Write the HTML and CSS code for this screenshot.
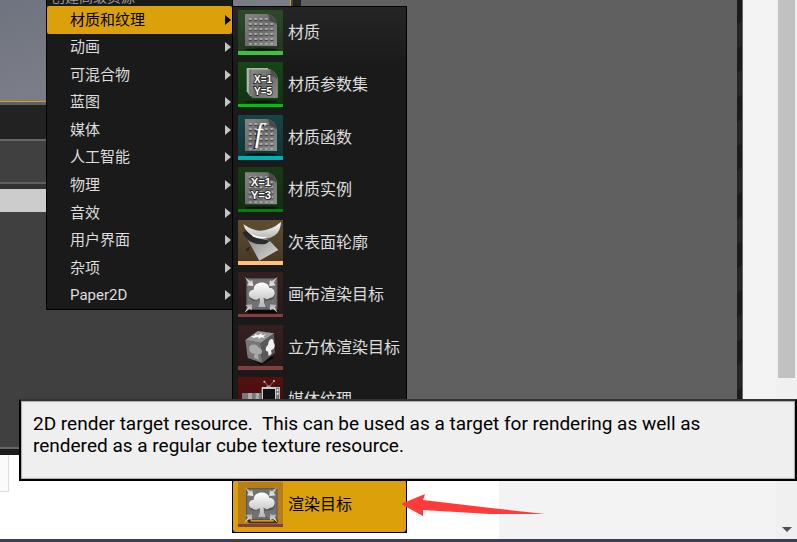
FILE: index.html
```html
<!DOCTYPE html>
<html lang="zh-CN">
<head>
<meta charset="utf-8">
<title>渲染目标</title>
<link rel="stylesheet" href="styles.css">
</head>
<body>
<svg class="defs" aria-hidden="true">
  <defs>
    <linearGradient id="paper" x1="0" y1="0" x2="1" y2="1"><stop offset="0" stop-color="#858585"/><stop offset=".5" stop-color="#6c6c6c"/><stop offset="1" stop-color="#8e8e8e"/></linearGradient>
    <linearGradient id="light" x1="0" y1="0" x2="0" y2="1"><stop offset="0" stop-color="#fff"/><stop offset="1" stop-color="#b4b4b4"/></linearGradient>
    <linearGradient id="spike" x1="0" y1="0" x2="0" y2="1"><stop offset="0" stop-color="#aaa"/><stop offset="1" stop-color="#eee"/></linearGradient>
    <linearGradient id="sheet" x1="0" y1="0" x2="1" y2="1"><stop offset="0" stop-color="#777"/><stop offset="1" stop-color="#ddd"/></linearGradient>
    <linearGradient id="shade" x1="0" y1="0" x2="0" y2="1"><stop offset="0" stop-color="#000" stop-opacity="0"/><stop offset="1" stop-color="#000" stop-opacity=".25"/></linearGradient>
    <pattern id="dots" x="29" y="21" width="16" height="15" patternUnits="userSpaceOnUse"><ellipse cx="8" cy="9" rx="6" ry="4" fill="#484848"/><ellipse cx="8" cy="6" rx="5" ry="3" fill="#b4b4b4"/></pattern>
    <symbol id="page" viewBox="0 0 135 135">
      <ellipse cx="70" cy="119" rx="49" ry="4" fill="#000" opacity=".6"/>
      <path d="M21 12H90Q112 18 117 42V108H21Z" fill="url(#paper)"/>
      <path d="M29 21H93V36H109V104H29Z" fill="url(#dots)"/>
      <path d="M88 12Q112 18 117 45Q108 34 94 34Q96 20 88 12Z" fill="#484848"/>
    </symbol>
    <symbol id="target" viewBox="0 0 135 135">
      <path d="M24 112H119V124H33Z" fill="#000" opacity=".65"/>
      <path d="M26 20H117V112H26Z" fill="#727272"/>
      <path d="M26 20H117V112H26Z" fill="none" stroke="#555" stroke-width="3"/>
      <g fill="url(#spike)">
        <path d="M20 14L36 27L43 25L46 42L27 40L32 33Z"/><path d="M119 14L107 33L113 40L94 42L95 25L102 27Z"/>
        <path d="M19 122L30 106L22 99L42 97L41 114L35 110Z"/><path d="M119 122L105 110L96 114L96 97L116 99L110 106Z"/>
      </g>
      <path d="M70 83L47 87C26 82 33 49 49 51C52 25 89 25 92 51C110 47 121 76 99 84L83 86L79 81L80 95L89 108H58L66 94Z" fill="#333" opacity=".5"/>
      <path d="M65 78C57 86 45 84 42 79C27 75 31 51 47 53C46 27 90 24 94 48C112 45 118 76 95 78C89 84 80 82 77 76L78 91L84 106H60L66 91Z" fill="url(#light)"/>
    </symbol>
  </defs>
</svg>

<main class="screen">
  <div class="article">
    <div class="editor">
      <div class="pane">
        <div class="viewport"></div>
        <div class="toolbar"></div>
        <div class="filters"></div>
        <div class="selected"></div>
      </div>
      <div class="divider"></div>
      <div class="workspace"></div>
      <div class="edge"></div>
    </div>
    <div class="caption"></div>
  </div>
  <div class="scrollbar"><div class="thumb"></div><div class="down"></div></div>
</main>
<footer class="taskbar"></footer>

<nav class="menu">
  <h2>创建高级资源</h2>
  <ul>
    <li><button class="active">材质和纹理</button></li>
    <li><button>动画</button></li>
    <li><button>可混合物</button></li>
    <li><button>蓝图</button></li>
    <li><button>媒体</button></li>
    <li><button>人工智能</button></li>
    <li><button>物理</button></li>
    <li><button>音效</button></li>
    <li><button>用户界面</button></li>
    <li><button>杂项</button></li>
    <li><button>Paper2D</button></li>
  </ul>
</nav>

<ul class="submenu">
  <li><button>
    <svg class="icon" viewBox="0 0 135 135"><path fill="#2c4a2a" d="M0 0h135v135H0z"/><path fill="url(#shade)" d="M0 0h135v123H0z"/><use href="#page"/><path fill="#40c040" d="M0 123h135v12H0z"/></svg>
    <span>材质</span></button></li>
  <li><button>
    <svg class="icon" viewBox="0 0 135 135"><path fill="#164516" d="M0 0h135v135H0z"/><path fill="url(#shade)" d="M0 0h135v126H0z"/><ellipse cx="70" cy="119" rx="50" ry="4" fill="#051b05"/><path d="M26 18H90V95H31L26 88Z" fill="#b4b4b4"/><path d="M32 22H98V102H37L32 96Z" fill="#777" stroke="#ccc"/><path d="M42 24H98Q115 31 119 51V107H42Z" fill="url(#paper)" stroke="#aaa"/><path d="M94 21Q114 27 119 53Q110 43 99 43Q101 30 94 21Z" fill="#505050"/><g class="glyph"><text x="48" y="62">X=1</text><text x="48" y="99">Y=5</text></g><path fill="#00bf0c" d="M0 126h135v9H0z"/></svg>
    <span>材质参数集</span></button></li>
  <li><button>
    <svg class="icon" viewBox="0 0 135 135"><path fill="#164545" d="M0 0h135v135H0z"/><path fill="url(#shade)" d="M0 0h135v123H0z"/><use href="#page"/><text class="function shadow" x="46" y="85">f</text><text class="function" x="50" y="81">f</text><path fill="#00b0b4" d="M0 123h135v12H0z"/></svg>
    <span>材质函数</span></button></li>
  <li><button>
    <svg class="icon" viewBox="0 0 135 135"><path fill="#193a16" d="M0 0h135v135H0z"/><path fill="url(#shade)" d="M0 0h135v126H0z"/><use href="#page" y="4"/><g class="glyph large"><text x="38" y="56">X=1</text><text x="38" y="96">Y=3</text></g><path fill="#008004" d="M0 126h135v9H0z"/></svg>
    <span>材质实例</span></button></li>
  <li><button>
    <svg class="icon" viewBox="0 0 135 135"><path fill="#5f4d32" d="M0 0h135v135H0z"/><path fill="url(#shade)" d="M0 0h135v123H0z"/><path d="M22 88L57 121L29 96L38 79Z" fill="#2c2419"/><path d="M16 36L94 61L121 90L64 122Z" fill="url(#sheet)"/><path d="M14 36Q30 78 82 72L98 62Q60 60 25 34Z" fill="#171717" opacity=".85"/><path d="M16 13Q72 54 129 6Q128 33 111 46Q88 63 60 51Q25 45 16 13Z" fill="url(#light)"/><path d="M28 34Q56 56 89 50Q72 61 46 50Z" fill="#fff"/><path fill="#ffc078" d="M0 123h135v12H0z"/></svg>
    <span>次表面轮廓</span></button></li>
  <li><button>
    <svg class="icon" viewBox="0 0 135 135"><path fill="#352020" d="M0 0h135v135H0z"/><path fill="url(#shade)" d="M0 0h135v126H0z"/><use href="#target"/><path fill="#804040" d="M0 126h135v9H0z"/></svg>
    <span>画布渲染目标</span></button></li>
  <li><button>
    <svg class="icon" viewBox="0 0 135 135"><path fill="#352020" d="M0 0h135v135H0z"/><path fill="url(#shade)" d="M0 0h135v123H0z"/><path d="M24 96L74 83L109 98L70 120Z" fill="#090606"/><path d="M22 45L68 54L73 115L29 99Z" fill="#777"/><path d="M68 54L108 25L111 83L73 115Z" fill="#595959"/><path d="M22 45L59 18L108 25L68 54Z" fill="#999"/><path d="M39 34L49 33L51 27L61 31L70 24L72 31L84 28L77 34L80 39L69 37L63 42L60 36L46 39Z" fill="#f5f5f5"/><path d="M49 85C41 88 30 75 34 66C39 54 60 57 62 68C76 70 77 91 59 87L63 104L48 99Z" fill="#aaa"/><path d="M90 79C79 81 83 64 90 60C92 38 108 37 107 54C115 62 106 76 99 75L101 86L92 93Z" fill="#f1f1f1"/><path fill="#804040" d="M0 123h135v12H0z"/></svg>
    <span>立方体渲染目标</span></button></li>
  <li><button>
    <svg class="icon" viewBox="0 0 135 135"><path fill="#541010" d="M0 0h135v135H0z"/><path fill="url(#shade)" d="M0 0h135v126H0z"/><path d="M12 48H70V110H12Z" fill="#777"/><path d="M30 48H42V110H30ZM53 48H63V110H53Z" fill="#aaa"/><path d="M79 14L93 30L108 12" fill="none" stroke="#aaa" stroke-width="2"/><circle cx="79" cy="14" r="3" fill="#ccc"/><circle cx="108" cy="12" r="3" fill="#ccc"/><path d="M84 30Q91 20 100 30Z" fill="#999"/><path d="M71 30H126V110H71Z" fill="#ccc"/><path d="M75 36H111V100H75Z" fill="#111"/><path d="M114 32H124V100H114Z" fill="#777"/><circle cx="119" cy="39" r="3" fill="#eee"/><circle cx="119" cy="50" r="3" fill="#eee"/></svg>
    <span>媒体纹理</span></button></li>
  <li></li>
  <li><button class="active">
    <svg class="icon" viewBox="0 0 135 135"><path fill="#b57e16" d="M0 0h135v135H0z"/><use href="#target"/><path d="M38 114H107V119H38Z" fill="#d69a0b"/><path fill="#804040" d="M0 126h135v9H0z"/></svg>
    <span>渲染目标</span></button></li>
</ul>

<div class="tooltip" role="tooltip">2D render target resource.&nbsp; This can be used as a target for rendering as well as rendered as a regular cube texture resource.</div>

<svg class="pointer" viewBox="0 0 144 24" aria-hidden="true"><path d="M0 11L24 1L22 7L90 15L144 21L89 21L22 17V23Z" fill="#ff3a3a"/></svg>
</body>
</html>
```

FILE: styles.css
```css
* { box-sizing: border-box; }

body {
  margin: 0;
  min-height: 100vh;
  display: flex;
  flex-direction: column;
  overflow: hidden;
  font-family: Roboto, "Noto Sans CJK SC", sans-serif;
}

ul { list-style: none; margin: 0; padding: 0; }
.defs { position: absolute; width: 0; height: 0; }

/* Page behind the menus */
.screen { flex: 1; display: grid; grid-template-columns: 1fr 21px; }
.article {
  background: linear-gradient(90deg, #fff 499px, #f3f3f3 499px);
  display: flex;
  flex-direction: column;
}
.editor {
  height: 455px;
  margin-right: 33px;
  display: flex;
  background: #606060;
}
.pane {
  width: 293px;
  display: flex;
  flex-direction: column;
  background: #404040;
  border-bottom: 6px solid #1c1c1c;
  box-shadow: inset 0 -2px #666;
}
.viewport {
  height: 102px;
  margin-right: 2px;
  background: linear-gradient(160deg, #6f737f, #7b7e88 50%, #6c6f7b);
  border: solid #dba00c;
  border-width: 0 1px 1px 0;
}
.toolbar { height: 39px; background: #222; border-top: 3px solid #606060; border-bottom: 2px solid #666; }
.filters { height: 48px; border-bottom: 5px solid #333; box-shadow: inset 0 -2px #606060; }
.selected { height: 23px; background: #ccc; }
.divider { width: 8px; background: #222; }
.workspace { flex: 1; }
.edge {
  width: 6px;
  border-right: 1px solid #666;
  background: repeating-linear-gradient(145deg, #1b1b1b 0 20px, #252525 20px 40px);
}
.caption { width: 9px; height: 37px; background: #fbfbfb; border: solid #ddd; border-width: 0 1px 1px 0; }

.scrollbar {
  background: #f0f0f0;
  display: flex;
  flex-direction: column;
  justify-content: space-between;
  padding: 0 2px 7px;
}
.thumb { height: 378px; background: #c1c1c1; }
.down { align-self: center; border: 5px solid transparent; border-top-color: #505050; border-bottom: 0; }
.taskbar { height: 3px; background: #3b3e54; }

/* Menus */
.menu {
  position: absolute;
  left: 46px;
  top: 0;
  width: 187px;
  height: 310px;
  background: #1a1a1a;
  border: 1px solid #000;
  border-top: 0;
  color: #ddd;
}
.menu h2 {
  margin: -14px 0 0 4px;
  height: 20px;
  font-size: 14px;
  line-height: 22px;
  font-weight: 400;
  color: #999;
}
.menu ul { height: 303px; display: grid; grid-auto-rows: 1fr; }

button {
  width: 100%;
  height: 100%;
  border: 0;
  background: none;
  color: inherit;
  font: inherit;
  text-align: left;
  display: flex;
  align-items: center;
}
.menu button { padding: 0 1px 0 23px; justify-content: space-between; font-size: 15px; line-height: 20px; border-radius: 2px; }
.menu button::after {
  content: "";
  border: 5px solid transparent;
  border-left: 6px solid #c4c4c4;
  border-right: 0;
}
button.active { background: #dca10a; color: #000; }
.menu button.active::after { border-left-color: #000; }

.submenu {
  position: absolute;
  left: 232px;
  top: 6px;
  width: 175px;
  height: 527px;
  border: 1px solid #000;
  background: linear-gradient(#252525, #1a1a1a 60px);
  color: #ddd;
  display: grid;
  grid-template-rows: repeat(10, 1fr);
  font-size: 16px;
}
.submenu li { min-height: 0; }
.submenu button { padding: 0 5px 2px; gap: 5px; border-radius: 3px; white-space: nowrap; }
.submenu span { padding-bottom: 3px; }
.icon { width: 45px; height: 45px; flex: none; }

.glyph { font: bold 30px "Liberation Sans", sans-serif; fill: #fff; stroke: #222; stroke-width: 5px; paint-order: stroke; }
.large { font-size: 34px; }
.function { font: italic 84px "Liberation Serif", serif; fill: #fff; }
.shadow { fill: #222; }

.tooltip {
  position: absolute;
  left: 19px;
  right: 0;
  top: 399px;
  height: 82px;
  padding: 12px 60px 12px 12px;
  border: 2px solid #000;
  border-top-color: #333;
  background: #efefef;
  box-shadow: inset 0 0 1px 1px #aaa;
  color: #000;
  font-size: 19px;
  line-height: 22px;
}
.pointer { position: absolute; left: 401px; top: 493px; width: 144px; height: 24px; }
```
